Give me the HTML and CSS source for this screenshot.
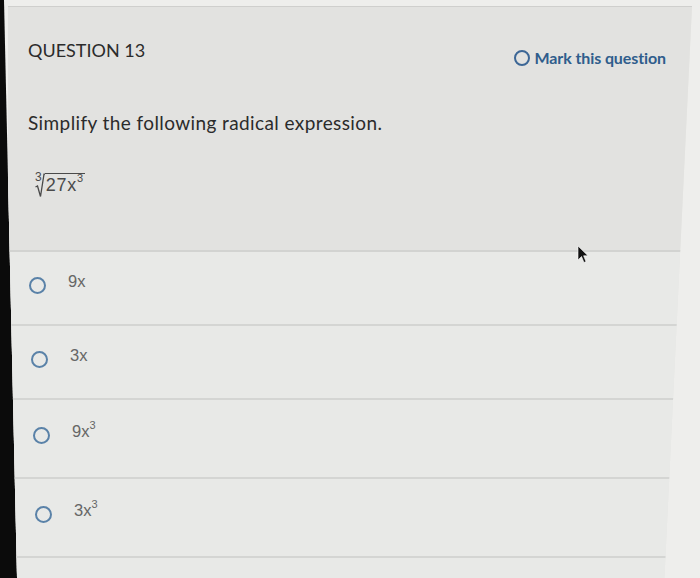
FILE: index.html
```html
<!DOCTYPE html>
<html>
<head>
<meta charset="utf-8">
<link rel="stylesheet" href="styles.css">
</head>
<body>
<div class="screen">
  <div class="panel">
    <section class="question">
      <div class="qhead">
        <h2 class="qtitle">QUESTION 13</h2>
        <a class="mark"><span class="mark-ring"></span>Mark this question</a>
      </div>
      <p class="prompt">Simplify the following radical expression.</p>
      <div class="math">
        <span class="index">3</span>
        <svg class="radical" width="10" height="25" viewBox="0 0 10 25"><path d="M0.5 14 L2.5 13 L5.5 23.5 L9 1.2 L10 1.2" fill="none" stroke="#4a4a4a" stroke-width="1.3"/></svg>
        <span class="radicand">27x<sup>3</sup></span>
      </div>
    </section>
    <ul class="options">
      <li class="option"><span class="radio"></span><span class="answer">9x</span></li>
      <li class="option"><span class="radio"></span><span class="answer">3x</span></li>
      <li class="option tall"><span class="radio"></span><span class="answer">9x<sup>3</sup></span></li>
      <li class="option tall"><span class="radio"></span><span class="answer">3x<sup>3</sup></span></li>
      <li class="option last"></li>
    </ul>
  </div>
  <svg class="cursor" width="12" height="19" viewBox="0 0 12 19"><path d="M1 1 L1 15 L4.5 11.5 L7 17.5 L9 16.6 L6.6 10.8 L11 10.8 Z" fill="#111" stroke="#fff" stroke-width="0.6"/></svg>
</div>
</body>
</html>
```
FILE: styles.css
```css
html, body {
  margin: 0;
  padding: 0;
  background: #0b0b0b;
}
.screen {
  position: relative;
  width: 700px;
  height: 578px;
  overflow: hidden;
  background: #eeeeec;
  clip-path: polygon(4px 0, 100% 0, 100% 100%, 17px 100%);
}
.panel {
  margin: 6px 8px 0 8px;
  border-top: 1px solid #cfcfcd;
  background: #e6e6e4;
  height: 580px;
  clip-path: polygon(0 0, 100% 0, calc(100% - 28px) 100%, 0 100%);
}
.question {
  background: #e2e2e0;
  padding: 32px 20px 0 20px;
  height: 211px;
  border-bottom: 2px solid #d2d3d1;
}
.qhead {
  display: flex;
  justify-content: space-between;
  align-items: flex-start;
}
.qtitle {
  margin: 0;
  font-family: "Lato", "Liberation Sans", sans-serif;
  font-weight: 400;
  font-size: 18px;
  color: #2b2b2b;
  letter-spacing: 0;
}
.mark {
  display: flex;
  align-items: center;
  margin-top: 9px;
  margin-right: 6px;
  font-family: "Lato", "Liberation Sans", sans-serif;
  font-weight: 700;
  font-size: 16px;
  color: #2f5d8c;
  letter-spacing: -0.1px;
}
.mark-ring {
  width: 12px;
  height: 12px;
  border: 2px solid #3d6796;
  border-radius: 50%;
  margin-right: 4px;
}
.prompt {
  margin: 44px 0 0 0;
  font-family: "Lato", "Liberation Sans", sans-serif;
  font-size: 19px;
  letter-spacing: 0.4px;
  color: #2b2b2b;
}
.math {
  margin-top: 38px;
  margin-left: 7px;
  font-family: "Liberation Sans", sans-serif;
  color: #4a4a4a;
  display: flex;
  align-items: flex-start;
}
.index {
  font-size: 12px;
  line-height: 11px;
  margin-right: -7px;
}
.radical {
  display: block;
  margin-top: 1px;
}
.radicand {
  border-top: 1.3px solid #4a4a4a;
  margin-top: 1px;
  padding: 1px 2px 0 1px;
  font-size: 18px;
  line-height: 20px;
  letter-spacing: 0.8px;
}
.radicand sup {
  font-size: 11px;
  line-height: 0;
  letter-spacing: 0;
  vertical-align: 9px;
}
.options {
  list-style: none;
  margin: 0;
  padding: 0;
}
.option {
  box-sizing: border-box;
  display: flex;
  align-items: center;
  height: 74px;
  padding-left: 21px;
  padding-bottom: 8px;
  border-bottom: 2px solid #d4d5d3;
  background: #e8e9e7;
}
.option:nth-child(2) { padding-left: 23px; }
.option:nth-child(3) { padding-left: 25px; }
.option:nth-child(4) { padding-left: 27px; }
.option.tall {
  height: 79px;
}
.option.last {
  border-bottom: none;
}
.radio {
  width: 13px;
  height: 13px;
  border: 2px solid #5a82a8;
  border-radius: 50%;
  margin-right: 22px;
  margin-top: 2px;
}
.answer {
  font-family: "Liberation Sans", sans-serif;
  font-size: 16.5px;
  color: #666;
  margin-top: -6px;
}
.answer sup {
  font-size: 11px;
  line-height: 0;
  vertical-align: 8px;
}
.cursor {
  position: absolute;
  left: 577px;
  top: 245px;
}
```
